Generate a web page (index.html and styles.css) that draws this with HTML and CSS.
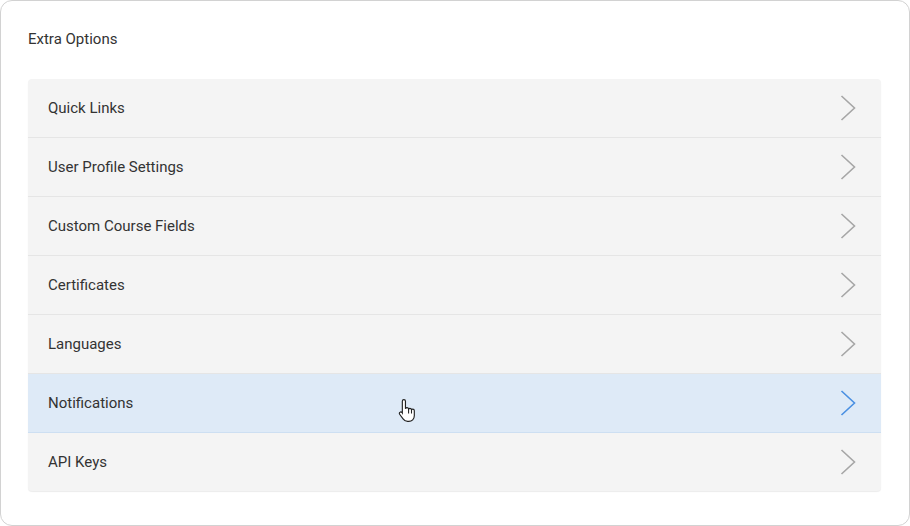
FILE: index.html
```html
<!DOCTYPE html>
<html>
<head>
<meta charset="utf-8">
<link rel="stylesheet" href="styles.css">
</head>
<body>
<div class="card">
  <div class="title">Extra Options</div>
  <div class="list">
    <div class="row"><span>Quick Links</span><svg class="chev" viewBox="0 0 16 26"><polyline points="1.5,1 14.5,13 1.5,25"/></svg></div>
    <div class="row"><span>User Profile Settings</span><svg class="chev" viewBox="0 0 16 26"><polyline points="1.5,1 14.5,13 1.5,25"/></svg></div>
    <div class="row"><span>Custom Course Fields</span><svg class="chev" viewBox="0 0 16 26"><polyline points="1.5,1 14.5,13 1.5,25"/></svg></div>
    <div class="row"><span>Certificates</span><svg class="chev" viewBox="0 0 16 26"><polyline points="1.5,1 14.5,13 1.5,25"/></svg></div>
    <div class="row"><span>Languages</span><svg class="chev" viewBox="0 0 16 26"><polyline points="1.5,1 14.5,13 1.5,25"/></svg></div>
    <div class="row active"><span>Notifications</span><svg class="chev" viewBox="0 0 16 26"><polyline points="1.5,1 14.5,13 1.5,25"/></svg>
      <svg class="cursor" viewBox="0 0 16 24"><path d="M5.5 1.5c.8 0 1.5.7 1.5 1.5v7.2c.3-.6.9-.9 1.5-.9.8 0 1.4.6 1.5 1.3.3-.4.8-.7 1.3-.7.8 0 1.4.6 1.5 1.3.3-.3.7-.5 1.2-.5.9 0 1.5.7 1.5 1.6v4.8c0 3.1-2.3 5.4-5.3 5.4H9c-1.9 0-3.2-.9-4.3-2.4L1.4 15.6c-.5-.7-.3-1.6.4-2 .6-.4 1.4-.2 1.9.3L4 14.4V3c0-.8.7-1.5 1.5-1.5z" fill="#fff" stroke="#222" stroke-width="1.1"/><path d="M10 10.6v4.2M12.8 11.3v3.5" stroke="#222" stroke-width="1" fill="none"/></svg>
    </div>
    <div class="row"><span>API Keys</span><svg class="chev" viewBox="0 0 16 26"><polyline points="1.5,1 14.5,13 1.5,25"/></svg></div>
  </div>
</div>
</body>
</html>
```

FILE: styles.css
```css
html, body {
  margin: 0;
  padding: 0;
  background: #fff;
}
.card {
  box-sizing: border-box;
  width: 910px;
  height: 526px;
  border: 1px solid #d2d2d2;
  border-radius: 12px;
  background: #fff;
  padding: 27px 28px 0 27px;
  font-family: Roboto, "Liberation Sans", sans-serif;
}
.title {
  font-size: 15px;
  line-height: 22px;
  color: #333;
  margin-bottom: 29px;
}
.list {
  background: #f4f4f4;
  border-radius: 4px;
  box-shadow: 0 1px 1px rgba(0,0,0,0.08);
  overflow: hidden;
}
.row {
  position: relative;
  display: flex;
  align-items: center;
  justify-content: space-between;
  height: 58px;
  padding: 0 25px 0 20px;
  border-bottom: 1px solid #e5e5e5;
  font-size: 15px;
  color: #333;
}
.row:last-child {
  border-bottom: none;
}
.row.active {
  background: #deeaf7;
  border-bottom-color: #cddff2;
}
.chev {
  width: 16px;
  height: 26px;
  fill: none;
  stroke: #a6a6a6;
  stroke-width: 1.6;
}
.row.active .chev {
  stroke: #4a90e2;
}
.cursor {
  position: absolute;
  left: 370px;
  top: 24px;
  width: 17px;
  height: 25px;
}
```
